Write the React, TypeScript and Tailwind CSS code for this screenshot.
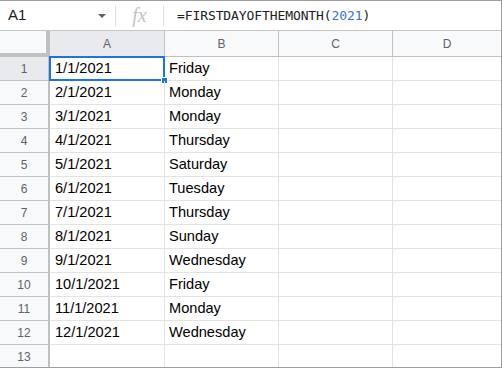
const rows = [
  ["1/1/2021", "Friday"],
  ["2/1/2021", "Monday"],
  ["3/1/2021", "Monday"],
  ["4/1/2021", "Thursday"],
  ["5/1/2021", "Saturday"],
  ["6/1/2021", "Tuesday"],
  ["7/1/2021", "Thursday"],
  ["8/1/2021", "Sunday"],
  ["9/1/2021", "Wednesday"],
  ["10/1/2021", "Friday"],
  ["11/1/2021", "Monday"],
  ["12/1/2021", "Wednesday"],
  ["", ""],
];

function FormulaBar() {
  return (
    <div className="flex items-center h-[30px] border-b border-[#c4c7c5] bg-white shrink-0">
      <div className="w-[116px] flex items-center justify-between pl-[8px] pr-[9px] border-r border-[#dadce0] h-[20px]">
        <span className="text-[15px] text-[#202124] font-['Liberation_Sans',Arial,sans-serif]">A1</span>
        <svg width="8" height="4" viewBox="0 0 8 4">
          <path d="M0 0 L8 0 L4 4 Z" fill="#5f6368" />
        </svg>
      </div>
      <div className="w-[48px] flex items-center justify-center border-r border-[#dadce0] h-[20px]">
        <span className="text-[20px] italic text-[#c0c4c9] leading-none font-['Liberation_Serif',serif] -mt-[2px]">fx</span>
      </div>
      <div className="pl-[13px] text-[13px] tracking-[-0.1px] text-[#202124] font-['DejaVu_Sans_Mono',monospace]">
        =FIRSTDAYOFTHEMONTH(<span className="text-[#3a6fd8]">2021</span>)
      </div>
    </div>
  );
}

function HeaderRow() {
  const cols = [
    { label: "A", w: "w-[115px] shrink-0 border-r bg-[#e8eaed]" },
    { label: "B", w: "w-[114px] shrink-0 border-r bg-[#f8f9fa]" },
    { label: "C", w: "w-[114px] shrink-0 border-r bg-[#f8f9fa]" },
    { label: "D", w: "flex-1 bg-[#f8f9fa]" },
  ];
  return (
    <div className="flex h-[26px] shrink-0 text-[12px] text-[#5f6368] font-['Liberation_Sans',Arial,sans-serif]">
      <div className="w-[50px] bg-[#f8f9fa] border-r-4 border-b-4 border-[#c0c0c0] shrink-0" />
      {cols.map((c) => (
        <div key={c.label} className={`flex items-center justify-center border-b border-[#c0c0c0] ${c.w}`}>
          {c.label}
        </div>
      ))}
    </div>
  );
}

export default function App() {
  return (
    <div className="w-[502px] h-[368px] border-t border-r border-b border-[#9e9e9e] bg-white flex flex-col overflow-hidden font-['Liberation_Sans',Arial,sans-serif]">
      <FormulaBar />
      <HeaderRow />
      {rows.map((r, idx) => (
        <div key={idx} className="flex h-[24px] shrink-0">
          <div
            className={`w-[50px] shrink-0 flex items-center justify-center text-[12px] text-[#5f6368] border-r-2 border-b border-r-[#c0c0c0] border-b-[#c0c0c0] ${
              idx === 0 ? "bg-[#e8eaed]" : "bg-[#f8f9fa]"
            }`}
          >
            {idx + 1}
          </div>
          <div className="w-[115px] shrink-0 relative border-r border-b border-[#e2e3e3] flex items-center pl-[5px] text-[14.6px] text-[#000]">
            {r[0]}
            {idx === 0 && (
              <>
                <div className="absolute -left-[1px] -top-[1px] w-[116px] h-[25px] border-2 border-[#1a73e8]" />
                <div className="absolute -right-[4px] -bottom-[4px] w-[7px] h-[7px] bg-[#1a73e8] border border-white" />
              </>
            )}
          </div>
          <div className="w-[114px] shrink-0 border-r border-b border-[#e2e3e3] flex items-center pl-[4px] text-[14.6px] text-[#000]">
            {r[1]}
          </div>
          <div className="w-[114px] shrink-0 border-r border-b border-[#e2e3e3]" />
          <div className="flex-1 border-b border-[#e2e3e3]" />
        </div>
      ))}
    </div>
  );
}
